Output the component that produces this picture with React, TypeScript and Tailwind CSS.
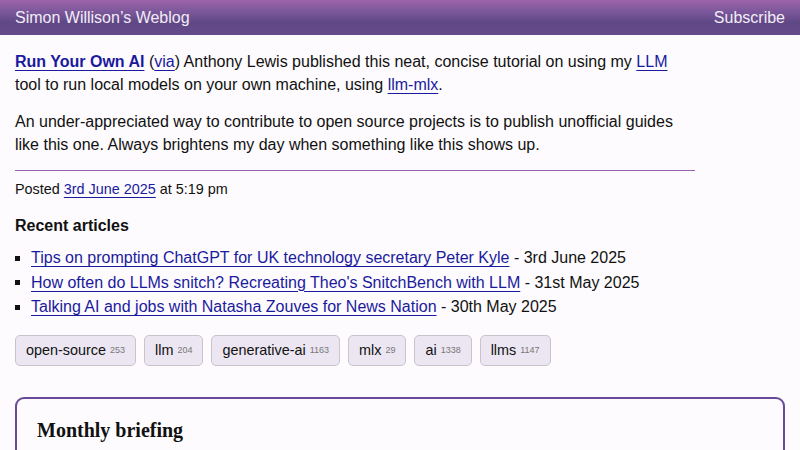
import React from 'react';

const tags = [
  { name: 'open-source', count: 253 },
  { name: 'llm', count: 204 },
  { name: 'generative-ai', count: 1163 },
  { name: 'mlx', count: 29 },
  { name: 'ai', count: 1338 },
  { name: 'llms', count: 1147 },
];

const recent = [
  { title: 'Tips on prompting ChatGPT for UK technology secretary Peter Kyle', date: '3rd June 2025' },
  { title: "How often do LLMs snitch? Recreating Theo's SnitchBench with LLM", date: '31st May 2025' },
  { title: 'Talking AI and jobs with Natasha Zouves for News Nation', date: '30th May 2025' },
];

const link = 'text-[#1a1a9e] underline underline-offset-[3px] decoration-1';

export default function App() {
  return (
    <div className="h-[450px] overflow-hidden bg-[#fdfbfd] font-['Liberation_Sans',Arial,sans-serif] text-[#111]">
      {/* Header */}
      <header className="flex items-center justify-between h-[35px] px-[15px] bg-[linear-gradient(to_bottom,#9c64aa_0%,#7a579a_35%,#5f4785_65%,#664b8b_100%)]">
        <span className="text-[16px] text-[#f3ecf7] leading-none">Simon Willison’s Weblog</span>
        <span className="text-[16px] text-[#f3ecf7] leading-none">Subscribe</span>
      </header>

      <main className="px-[15px] pt-[16px]">
        <div className="w-[680px]">
          <p className="text-[16px] leading-[22.5px]">
            <a className={`${link} font-bold`}>Run Your Own AI</a> (<a className={link}>via</a>) Anthony Lewis published this neat, concise tutorial on using my{' '}
            <a className={link}>LLM</a> tool to run local models on your own machine, using{' '}
            <a className={link}>llm-mlx</a>.
          </p>
          <p className="mt-[14px] text-[16px] leading-[23px] pr-[4px]">
            An under-appreciated way to contribute to open source projects is to publish unofficial guides like this one. Always brightens my day when something like this shows up.
          </p>
          <div className="mt-[14px] border-t border-[#9b62b0]" />
          <p className="mt-[9px] text-[14.4px] leading-[18px]">
            Posted <a className={link}>3rd June 2025</a> at 5:19 pm
          </p>
        </div>

        <h3 className="mt-[18px] text-[16px] font-bold leading-[20px]">Recent articles</h3>
        <ul className="mt-[12px] flex flex-col gap-[4.5px]">
          {recent.map(r => (
            <li key={r.title} className="flex items-center text-[16px] leading-[20px]">
              <span className="w-[5px] h-[5px] bg-[#111] mr-[11px]" />
              <a className={link}>{r.title}</a>
              <span>&nbsp;- {r.date}</span>
            </li>
          ))}
        </ul>

        <div className="mt-[18px] flex gap-[8px]">
          {tags.map(t => (
            <span
              key={t.name}
              className="flex items-center h-[31px] px-[10px] rounded-[5px] bg-[#ebe6f1] border border-[#c8c3cd] text-[14.4px] text-[#111]"
            >
              {t.name}
              <span className="ml-[4px] text-[9px] text-[#777]">{t.count}</span>
            </span>
          ))}
        </div>

        <div className="mt-[31px] w-[770px] h-[80px] border-2 border-[#6a4a98] rounded-[9px] px-[20px] pt-[18px]">
          <h2 className="font-['Liberation_Serif','Times_New_Roman',serif] font-bold text-[20px] leading-[26px]">
            Monthly briefing
          </h2>
        </div>
      </main>
    </div>
  );
}
